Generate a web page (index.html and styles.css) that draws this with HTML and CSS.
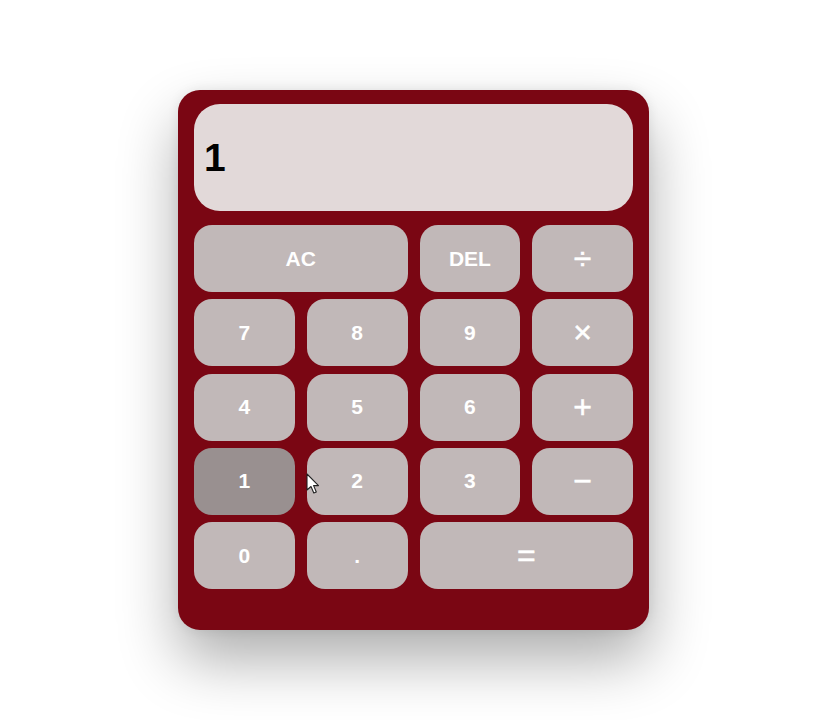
FILE: index.html
```html
<!DOCTYPE html>
<html lang="en">
<head>
<meta charset="utf-8">
<title>Calculator</title>
<link rel="stylesheet" href="styles.css">
</head>
<body>
<div class="calculator">
  <div class="display">1</div>
  <div class="keys">
    <button class="key span2">AC</button>
    <button class="key">DEL</button>
    <button class="key op">÷</button>
    <button class="key">7</button>
    <button class="key">8</button>
    <button class="key">9</button>
    <button class="key op">×</button>
    <button class="key">4</button>
    <button class="key">5</button>
    <button class="key">6</button>
    <button class="key op">+</button>
    <button class="key hover">1</button>
    <button class="key">2</button>
    <button class="key">3</button>
    <button class="key op">−</button>
    <button class="key">0</button>
    <button class="key">.</button>
    <button class="key op span2">=</button>
  </div>
  <svg class="cursor" width="14" height="22" viewBox="0 0 14 22">
    <path d="M1 1 L1 17 L5 13.5 L7.8 20 L10.3 19 L7.6 12.6 L12.5 12.6 Z" fill="#fff" stroke="#222" stroke-width="1.1" stroke-linejoin="round"/>
  </svg>
</div>
</body>
</html>
```
FILE: styles.css
```css
html, body {
  margin: 0;
  padding: 0;
  background: #ffffff;
}
body {
  min-height: 100vh;
  display: flex;
  align-items: center;
  justify-content: center;
  font-family: "Liberation Sans", Arial, sans-serif;
}
.calculator {
  position: relative;
  box-sizing: border-box;
  width: 471px;
  height: 540px;
  margin-right: 1px;
  padding: 14px 16px 0 16px;
  background: #7a0613;
  border-radius: 22px;
  box-shadow: 0 30px 60px rgba(0, 0, 0, 0.32), 0 0 12px rgba(0, 0, 0, 0.08);
}
.display {
  box-sizing: border-box;
  height: 107px;
  background: #e2d9d9;
  border-radius: 26px;
  display: flex;
  align-items: center;
  padding-left: 10px;
  font-size: 39px;
  font-weight: bold;
  color: #000;
}
.keys {
  margin-top: 14px;
  display: grid;
  grid-template-columns: repeat(4, 1fr);
  grid-auto-rows: 67px;
  column-gap: 12px;
  row-gap: 7.3px;
}
.key {
  border: none;
  border-radius: 18px;
  background: #c1b8b8;
  color: #ffffff;
  font-family: "Liberation Sans", Arial, sans-serif;
  font-size: 21px;
  font-weight: bold;
  padding: 0;
  display: flex;
  align-items: center;
  justify-content: center;
}
.key.op {
  font-size: 32px;
  font-weight: normal;
  -webkit-text-stroke: 0.5px #ffffff;
}
.key.span2 {
  grid-column: span 2;
}
.key.hover {
  background: #999090;
}
.cursor {
  position: absolute;
  left: 128px;
  top: 383px;
}
```
